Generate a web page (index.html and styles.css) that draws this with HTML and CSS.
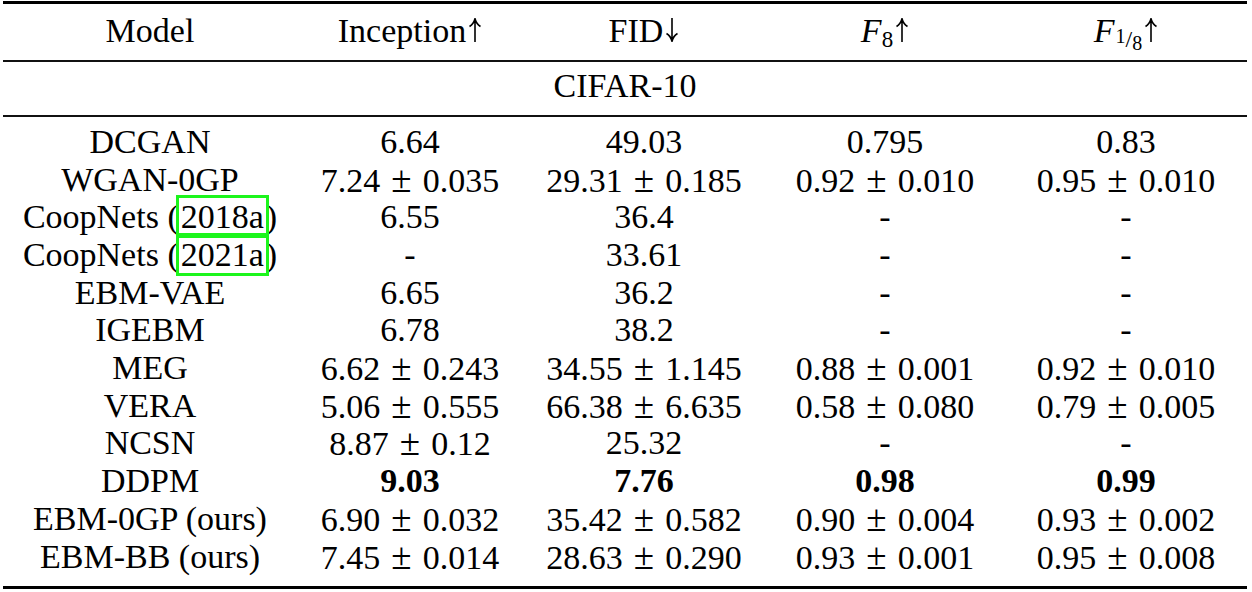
FILE: index.html
```html
<!DOCTYPE html>
<html>
<head>
<meta charset="utf-8">
<link rel="stylesheet" href="styles.css">
</head>
<body>
<div class="table">
  <div class="rule thick top"></div>
  <div class="row head">
    <div class="cell">Model</div>
    <div class="cell">Inception<svg class="arr" viewBox="0 0 14 24" width="14" height="24"><path d="M7 24V1.5M1.5 8.5C4 7 6 4.5 7 0.8C8 4.5 10 7 12.5 8.5"/></svg></div>
    <div class="cell">FID<svg class="arr" viewBox="0 0 14 24" width="14" height="24"><path d="M7 0V22.5M1.5 15.5C4 17 6 19.5 7 23.2C8 19.5 10 17 12.5 15.5"/></svg></div>
    <div class="cell"><span class="mi">F</span><sub class="sb">8</sub><svg class="arr" viewBox="0 0 14 24" width="14" height="24"><path d="M7 24V1.5M1.5 8.5C4 7 6 4.5 7 0.8C8 4.5 10 7 12.5 8.5"/></svg></div>
    <div class="cell"><span class="mi">F</span><sub class="sb frac"><span class="num">1</span><span class="sl">/</span><span class="den">8</span></sub><svg class="arr" viewBox="0 0 14 24" width="14" height="24"><path d="M7 24V1.5M1.5 8.5C4 7 6 4.5 7 0.8C8 4.5 10 7 12.5 8.5"/></svg></div>
  </div>
  <div class="rule"></div>
  <div class="section">CIFAR-10</div>
  <div class="rule"></div>
  <div class="body">
    <div class="row">
      <div class="cell">DCGAN</div><div class="cell">6.64</div><div class="cell">49.03</div><div class="cell">0.795</div><div class="cell">0.83</div>
    </div>
    <div class="row">
      <div class="cell">WGAN-0GP</div><div class="cell">7.24<span class="pm">±</span>0.035</div><div class="cell">29.31<span class="pm">±</span>0.185</div><div class="cell">0.92<span class="pm">±</span>0.010</div><div class="cell">0.95<span class="pm">±</span>0.010</div>
    </div>
    <div class="row">
      <div class="cell">CoopNets (<span class="cite">2018a</span>)</div><div class="cell">6.55</div><div class="cell">36.4</div><div class="cell">-</div><div class="cell">-</div>
    </div>
    <div class="row">
      <div class="cell">CoopNets (<span class="cite">2021a</span>)</div><div class="cell">-</div><div class="cell">33.61</div><div class="cell">-</div><div class="cell">-</div>
    </div>
    <div class="row">
      <div class="cell">EBM-VAE</div><div class="cell">6.65</div><div class="cell">36.2</div><div class="cell">-</div><div class="cell">-</div>
    </div>
    <div class="row">
      <div class="cell">IGEBM</div><div class="cell">6.78</div><div class="cell">38.2</div><div class="cell">-</div><div class="cell">-</div>
    </div>
    <div class="row">
      <div class="cell">MEG</div><div class="cell">6.62<span class="pm">±</span>0.243</div><div class="cell">34.55<span class="pm">±</span>1.145</div><div class="cell">0.88<span class="pm">±</span>0.001</div><div class="cell">0.92<span class="pm">±</span>0.010</div>
    </div>
    <div class="row">
      <div class="cell">VERA</div><div class="cell">5.06<span class="pm">±</span>0.555</div><div class="cell">66.38<span class="pm">±</span>6.635</div><div class="cell">0.58<span class="pm">±</span>0.080</div><div class="cell">0.79<span class="pm">±</span>0.005</div>
    </div>
    <div class="row">
      <div class="cell">NCSN</div><div class="cell">8.87<span class="pm">±</span>0.12</div><div class="cell">25.32</div><div class="cell">-</div><div class="cell">-</div>
    </div>
    <div class="row">
      <div class="cell">DDPM</div><div class="cell b">9.03</div><div class="cell b">7.76</div><div class="cell b">0.98</div><div class="cell b">0.99</div>
    </div>
    <div class="row">
      <div class="cell">EBM-0GP (ours)</div><div class="cell">6.90<span class="pm">±</span>0.032</div><div class="cell">35.42<span class="pm">±</span>0.582</div><div class="cell">0.90<span class="pm">±</span>0.004</div><div class="cell">0.93<span class="pm">±</span>0.002</div>
    </div>
    <div class="row">
      <div class="cell">EBM-BB (ours)</div><div class="cell">7.45<span class="pm">±</span>0.014</div><div class="cell">28.63<span class="pm">±</span>0.290</div><div class="cell">0.93<span class="pm">±</span>0.001</div><div class="cell">0.95<span class="pm">±</span>0.008</div>
    </div>
  </div>
  <div class="rule thick"></div>
</div>
</body>
</html>
```
FILE: styles.css
```css
html, body {
  margin: 0;
  padding: 0;
  background: #fff;
}
body {
  font-family: "Liberation Serif", "Times New Roman", serif;
  font-size: 34px;
  line-height: 37.7px;
  color: #000;
}
.table {
  width: 1244px;
  margin: 1px 0 0 3px;
}
.rule {
  height: 2px;
  background: #111;
}
.rule.thick {
  height: 3px;
  background: #000;
}
.row {
  display: grid;
  grid-template-columns: 294px 226px 242px 240px 242px;
  height: 37.7px;
}
.cell {
  text-align: center;
  white-space: nowrap;
}
.head {
  padding: 8px 0 10px;
}
.section {
  text-align: center;
  padding: 5.5px 0 10.5px;
  height: 37.7px;
}
.body {
  padding: 5.6px 0 11px;
}
.b {
  font-weight: bold;
}
.pm {
  font-size: 37px;
  margin: 0 11px;
}
.mi {
  font-style: italic;
}
.sb {
  font-size: 23px;
  line-height: 0;
  vertical-align: -5px;
}
.frac {
  font-size: 20px;
  margin-left: 1px;
}
.frac .num {
  vertical-align: 4px;
}
.frac .sl {
  font-size: 24px;
}
.frac .den {
  vertical-align: -3px;
}
.arr {
  display: inline-block;
  vertical-align: 0;
  margin-left: 2px;
  fill: none;
  stroke: #000;
  stroke-width: 1.6;
}
.cite {
  outline: 3px solid #1cf51c;
  outline-offset: 0px;
  padding: 0 2px;
}
```
